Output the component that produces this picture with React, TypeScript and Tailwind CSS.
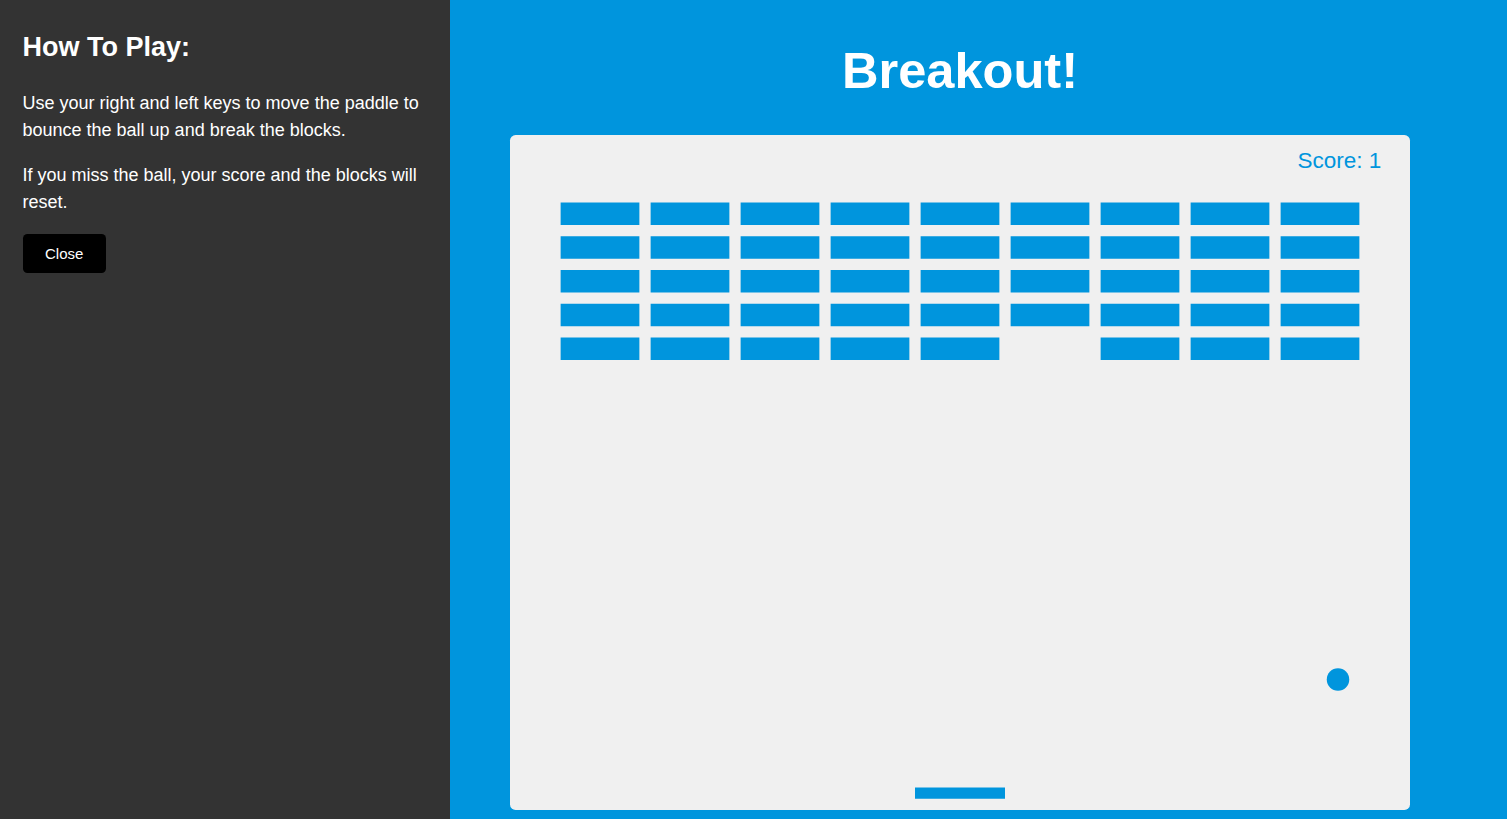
import React from 'react';

const BRICK_ROWS = 5;
const BRICK_COLS = 9;
// row 4, column 5 has been broken
const BROKEN = new Set(['4-5']);

export default function App() {
  const bricks: { x: number; y: number; key: string }[] = [];
  for (let r = 0; r < BRICK_ROWS; r++) {
    for (let c = 0; c < BRICK_COLS; c++) {
      if (BROKEN.has(`${r}-${c}`)) continue;
      bricks.push({ x: 45 + c * 80, y: 60 + r * 30, key: `${r}-${c}` });
    }
  }

  return (
    <div className="flex h-screen overflow-hidden font-['Liberation_Sans',Arial,sans-serif]">
      {/* Rules */}
      <aside className="w-[450px] shrink-0 bg-[#333333] px-[22.5px] pt-[27px] text-white text-[18px] leading-[1.5]">
        <h2 className="text-[27px] font-bold mb-[22px]">How To Play:</h2>
        <p className="mb-[18px]">
          Use your right and left keys to move the paddle to bounce the ball up and break the blocks.
        </p>
        <p className="mb-[18px]">If you miss the ball, your score and the blocks will reset.</p>
        <button className="bg-black text-white text-[15px] leading-[1.15] px-[22.5px] py-[11.25px] rounded-[4.5px]">
          Close
        </button>
      </aside>

      {/* Game */}
      <main className="flex-1 bg-[#0095dd] pl-[60px]">
        <div className="w-[900px] flex flex-col items-center">
          <h1 className="mt-[42px] mb-[34.5px] text-[50.6px] leading-[1.15] font-bold text-white">Breakout!</h1>
          <div className="w-[900px] h-[675px] rounded-[5.6px] bg-[#f0f0f0] overflow-hidden">
            <svg width="900" height="675" viewBox="0 0 800 600">
              <text
                x="700"
                y="29.3"
                fill="#0095dd"
                fontSize="20"
                fontFamily="'Liberation Sans', Arial, sans-serif"
              >
                Score: 1
              </text>
              {bricks.map(b => (
                <rect key={b.key} x={b.x} y={b.y} width="70" height="20" fill="#0095dd" />
              ))}
              <circle cx="736" cy="484" r="10" fill="#0095dd" />
              <rect x="360" y="580" width="80" height="10" fill="#0095dd" />
            </svg>
          </div>
        </div>
      </main>
    </div>
  );
}
